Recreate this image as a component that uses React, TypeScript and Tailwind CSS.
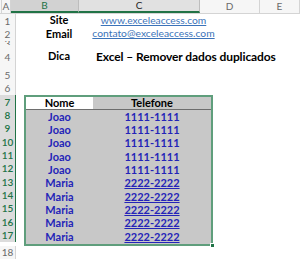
import React from "react";

const COLS = ["A", "B", "C", "D", "E"];
const colW = ["w-[9px]", "w-[68px]", "w-[121px]", "w-[60px]", "w-[40px]"];

type Row = { n: number; h: string };

const rows: Row[] = [
  { n: 1, h: "h-[13.3px]" },
  { n: 2, h: "h-[13.4px]" },
  { n: 3, h: "h-[4.3px]" },
  { n: 4, h: "h-[23.3px]" },
  { n: 5, h: "h-[13.4px]" },
  { n: 6, h: "h-[13.3px]" },
];

const data = [
  ...Array.from({ length: 5 }, () => ({ nome: "Joao", tel: "1111-1111", u: false })),
  ...Array.from({ length: 5 }, () => ({ nome: "Maria", tel: "2222-2222", u: true })),
];

function RowHead({ n, h, sel }: { n: number; h: string; sel?: boolean }) {
  return (
    <div
      className={`${h} w-[16px] flex items-center justify-center overflow-hidden text-[10px] leading-none border-r ${
        sel
          ? "bg-[#dcdcdc] text-[#217346] border-[#217346] font-semibold"
          : "bg-[#f6f6f6] text-[#6a6a6a] border-[#d4d4d4]"
      }`}
    >
      {n}
    </div>
  );
}

export default function App() {
  return (
    <div className="w-[300px] h-[259px] overflow-hidden bg-white font-['Lato','Open_Sans',sans-serif] text-[11px] text-black">
      {/* column header */}
      <div className="flex h-[14px] bg-[#f6f6f6] border-b border-[#d4d4d4]">
        <div className="w-[16px] border-r border-[#d4d4d4] relative">
          <div className="absolute right-[1px] bottom-[1px] w-0 h-0 border-l-[7px] border-l-transparent border-b-[7px] border-b-[#d6d6d6]" />
        </div>
        {COLS.map((c, i) => (
          <div
            key={c}
            className={`${colW[i]} shrink-0 flex items-center justify-center text-[10px] border-r ${
              c === "B"
                ? "bg-[#d2d2d2] text-[#217346] border-[#bdbdbd] border-b-2 border-b-[#217346]"
                : c === "C"
                ? "bg-[#e1e1e1] text-[#262626] border-[#bdbdbd] border-b-2 border-b-[#217346]"
                : "text-[#6a6a6a] border-[#d4d4d4]"
            }`}
          >
            {c}
          </div>
        ))}
      </div>

      {/* rows 1-6 */}
      {rows.map((r) => (
        <div key={r.n} className={`flex ${r.h}`}>
          <RowHead n={r.n} h={r.h} />
          <div className="w-[9px]" />
          <div className="w-[68px] flex items-center justify-center font-bold">
            {r.n === 1 && "Site"}
            {r.n === 2 && "Email"}
            {r.n === 4 && "Dica"}
          </div>
          <div className="w-[121px] flex items-center justify-center whitespace-nowrap relative">
            {r.n === 1 && <span className="text-[#3b73b9] underline text-[10.3px]">www.exceleaccess.com</span>}
            {r.n === 2 && <span className="text-[#3b73b9] underline text-[10.3px]">contato@exceleaccess.com</span>}
            {r.n === 4 && (
              <span className="absolute left-[3px] top-1/2 -translate-y-1/2 font-bold text-[12px] tracking-[-0.1px]">
                Excel – Remover dados duplicados
              </span>
            )}
          </div>
        </div>
      ))}

      {/* rows 7-17 with table */}
      <div className="flex">
        <div className="flex flex-col">
          {Array.from({ length: 11 }, (_, i) => (
            <RowHead key={i} n={7 + i} h="h-[13.33px]" sel />
          ))}
        </div>
        <div className="w-[9px]" />
        <div className="relative w-[189px] border-2 border-[#5f9e7c] -ml-[1px]">
          <div className="flex h-[13.33px] border-b border-[#6e6e6e]">
            <div className="w-[67px] bg-white flex items-center justify-center font-bold">Nome</div>
            <div className="flex-1 bg-[#c8c8c8] flex items-center justify-center font-bold">Telefone</div>
          </div>
          {data.map((d, i) => (
            <div key={i} className="flex h-[13.33px] bg-[#c8c8c8] text-[#2424b8] font-bold">
              <div className="w-[67px] flex items-center justify-center">{d.nome}</div>
              <div className="flex-1 flex items-center justify-center">
                <span className={d.u ? "underline" : ""}>{d.tel}</span>
              </div>
            </div>
          ))}
          <div className="absolute -right-[4px] -bottom-[4px] w-[5px] h-[5px] bg-[#217346] border border-white" />
        </div>
      </div>

      <div className="flex h-[13.33px]">
        <RowHead n={18} h="h-[13.33px]" />
      </div>
      <div className="flex h-[13.33px]">
        <RowHead n={19} h="h-[13.33px]" />
      </div>
    </div>
  );
}
